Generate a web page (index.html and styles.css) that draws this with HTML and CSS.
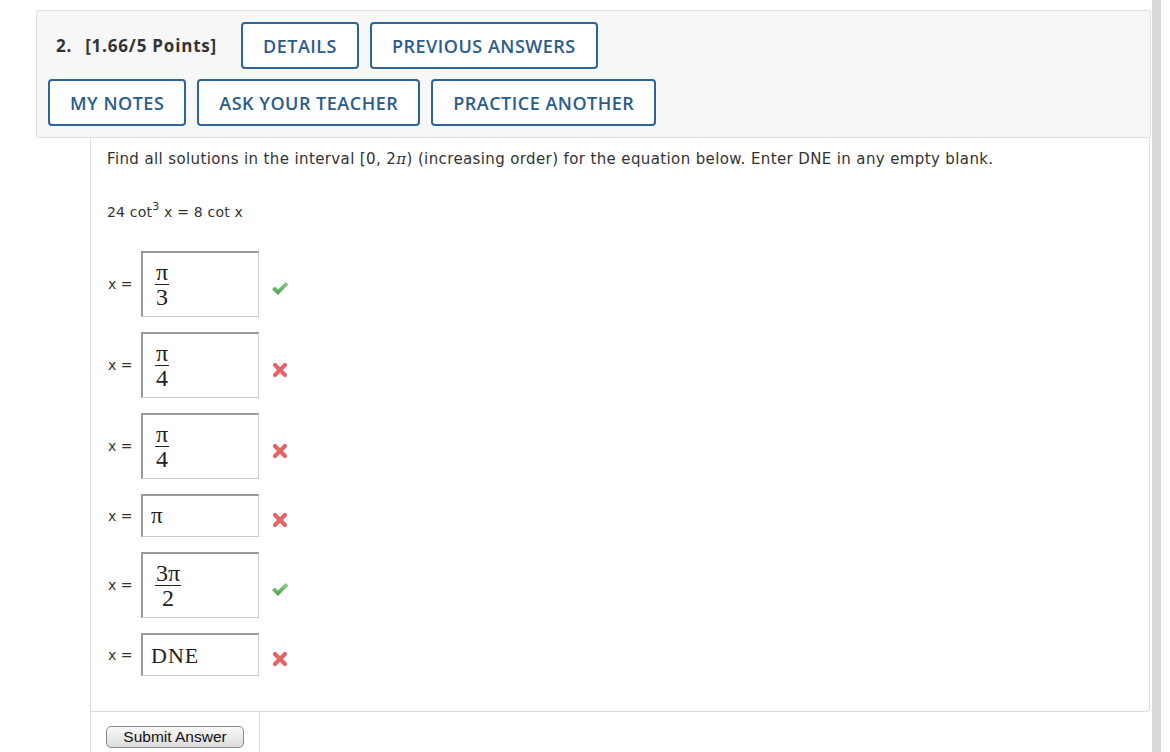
FILE: index.html
```html
<!DOCTYPE html>
<html>
<head>
<meta charset="utf-8">
<link rel="stylesheet" href="styles.css">
</head>
<body>
<div class="page">
  <div class="main">
    <div class="qhead">
      <div class="row row-first">
        <span class="qnum">2.</span>
        <span class="qpoints">[1.66/5 Points]</span>
        <button class="hbtn">DETAILS</button>
        <button class="hbtn">PREVIOUS ANSWERS</button>
      </div>
      <div class="row">
        <button class="hbtn">MY NOTES</button>
        <button class="hbtn">ASK YOUR TEACHER</button>
        <button class="hbtn">PRACTICE ANOTHER</button>
      </div>
    </div>
    <div class="qbody">
      <p class="prompt">Find all solutions in the interval [0, 2<i class="pi">π</i>) (increasing order) for the equation below. Enter DNE in any empty blank.</p>
      <p class="equation">24 cot<sup>3</sup> x = 8 cot x</p>
      <div class="answers">
        <div class="ans">
          <span class="lbl">x =</span>
          <div class="box tall"><span class="frac"><span class="num">π</span><span class="den">3</span></span></div>
          <svg class="icon" viewBox="0 0 18 15" width="18" height="15"><defs><linearGradient id="g1" x1="0" y1="0" x2="0" y2="1"><stop offset="0" stop-color="#8fd18a"/><stop offset="1" stop-color="#4f9e4f"/></linearGradient></defs><path d="M1 8.2 L4 5.6 L7 8.6 L14.6 1 L17.4 3.6 L7 14 Z" fill="url(#g1)"/></svg>
        </div>
        <div class="ans">
          <span class="lbl">x =</span>
          <div class="box tall"><span class="frac"><span class="num">π</span><span class="den">4</span></span></div>
          <svg class="icon cross" viewBox="0 0 16 16" width="16" height="16"><path d="M3 3 L13 13 M13 3 L3 13" stroke="#e36565" stroke-width="4.2" stroke-linecap="round"/></svg>
        </div>
        <div class="ans">
          <span class="lbl">x =</span>
          <div class="box tall"><span class="frac"><span class="num">π</span><span class="den">4</span></span></div>
          <svg class="icon cross" viewBox="0 0 16 16" width="16" height="16"><path d="M3 3 L13 13 M13 3 L3 13" stroke="#e36565" stroke-width="4.2" stroke-linecap="round"/></svg>
        </div>
        <div class="ans">
          <span class="lbl">x =</span>
          <div class="box short"><span class="plain">π</span></div>
          <svg class="icon cross" viewBox="0 0 16 16" width="16" height="16"><path d="M3 3 L13 13 M13 3 L3 13" stroke="#e36565" stroke-width="4.2" stroke-linecap="round"/></svg>
        </div>
        <div class="ans">
          <span class="lbl">x =</span>
          <div class="box tall"><span class="frac"><span class="num">3π</span><span class="den">2</span></span></div>
          <svg class="icon" viewBox="0 0 18 15" width="18" height="15"><defs><linearGradient id="g2" x1="0" y1="0" x2="0" y2="1"><stop offset="0" stop-color="#8fd18a"/><stop offset="1" stop-color="#4f9e4f"/></linearGradient></defs><path d="M1 8.2 L4 5.6 L7 8.6 L14.6 1 L17.4 3.6 L7 14 Z" fill="url(#g2)"/></svg>
        </div>
        <div class="ans">
          <span class="lbl">x =</span>
          <div class="box short"><span class="plain dne">DNE</span></div>
          <svg class="icon cross" viewBox="0 0 16 16" width="16" height="16"><path d="M3 3 L13 13 M13 3 L3 13" stroke="#e36565" stroke-width="4.2" stroke-linecap="round"/></svg>
        </div>
      </div>
    </div>
    <div class="submit-area">
      <button class="submit">Submit Answer</button>
    </div>
  </div>
  <div class="scrollbar"></div>
</div>
</body>
</html>
```

FILE: styles.css
```css
html, body {
  margin: 0;
  padding: 0;
  background: #ffffff;
}
.page {
  display: flex;
  height: 752px;
  overflow: hidden;
}
.main {
  margin-left: 36px;
  padding-top: 10px;
  width: 1115px;
}
.scrollbar {
  margin-left: 1px;
  width: 9px;
  height: 752px;
  background: #d9d9d9;
}
.qhead {
  background: #f7f7f7;
  border: 1px solid #e1e1e1;
  border-radius: 2px;
  padding: 11px 11px 11px 11px;
  display: flex;
  flex-direction: column;
  gap: 10px;
}
.row {
  display: flex;
  align-items: center;
  gap: 11px;
}
.row-first {
  padding-left: 8px;
}
.qnum, .qpoints {
  font-family: "Open Sans", "Liberation Sans", sans-serif;
  font-weight: 700;
  font-size: 17px;
  letter-spacing: 0.8px;
  color: #333333;
}
.qnum {
  margin-right: 2px;
}
.qpoints {
  margin-right: 13px;
}
.hbtn {
  height: 47px;
  padding: 0 20px;
  border: 2px solid #2d6598;
  border-radius: 4px;
  background: #ffffff;
  font-family: "Open Sans", "Liberation Sans", sans-serif;
  font-size: 18px;
  font-weight: 600;
  letter-spacing: 0.5px;
  color: #2a5c8e;
  margin: 0;
  flex-shrink: 0;
}
.qbody {
  margin-left: 54px;
  margin-right: 1px;
  border: 1px solid #dddddd;
  border-top: none;
  border-bottom-right-radius: 4px;
  padding: 11px 16px 35px 16px;
  font-family: "DejaVu Sans", Verdana, sans-serif;
  font-size: 14px;
  color: #333333;
}
.prompt {
  margin: 0;
  line-height: 20px;
  font-size: 15px;
  letter-spacing: 0.38px;
}
.pi {
  font-family: "DejaVu Serif", serif;
  font-style: italic;
}
.equation {
  margin: 33px 0 0 0;
  line-height: 20px;
  letter-spacing: 0.2px;
}
.equation sup {
  font-size: 11px;
  line-height: 0;
  vertical-align: 7px;
}
.answers {
  margin-top: 29px;
  display: flex;
  flex-direction: column;
  gap: 15px;
}
.ans {
  display: flex;
  align-items: center;
}
.lbl {
  width: 34px;
  flex-shrink: 0;
  padding-left: 1px;
  box-sizing: border-box;
  font-size: 14px;
  color: #333333;
}
.box {
  box-sizing: border-box;
  flex-shrink: 0;
  width: 118px;
  border: 1px solid #cccccc;
  border-top: 2px solid #9a9a9a;
  border-left: 2px solid #9a9a9a;
  background: #ffffff;
  display: flex;
  align-items: center;
  padding-left: 8px;
  font-family: "Liberation Serif", "DejaVu Serif", serif;
  color: #222222;
}
.box.tall {
  height: 66px;
}
.box.short {
  height: 43px;
}
.frac {
  display: inline-flex;
  flex-direction: column;
  align-items: center;
  margin-left: 4px;
  font-size: 24px;
}
.num {
  line-height: 20px;
  padding: 0 1px 2px 1px;
  border-bottom: 1px solid #222222;
}
.den {
  line-height: 22px;
  padding-top: 1px;
}
.plain {
  font-size: 23px;
  line-height: 24px;
}
.dne {
  font-size: 22px;
  letter-spacing: 1px;
  margin-top: 2px;
}
.icon {
  margin-left: 12px;
  margin-top: 9px;
}
.cross {
  margin-left: 13px;
  margin-top: 9px;
}
.submit-area {
  margin-left: 54px;
  width: 170px;
  box-sizing: border-box;
  border-left: 1px solid #dddddd;
  border-right: 1px solid #dddddd;
  padding: 14px 0 0 15px;
  height: 60px;
}
.submit {
  display: block;
  width: 138px;
  height: 22px;
  padding: 0;
  border: 1px solid #8a8a8a;
  border-radius: 5px;
  background: linear-gradient(#f8f8f8, #dcdcdc);
  font-family: "Liberation Sans", Arial, sans-serif;
  font-size: 15.5px;
  color: #111111;
}
```
